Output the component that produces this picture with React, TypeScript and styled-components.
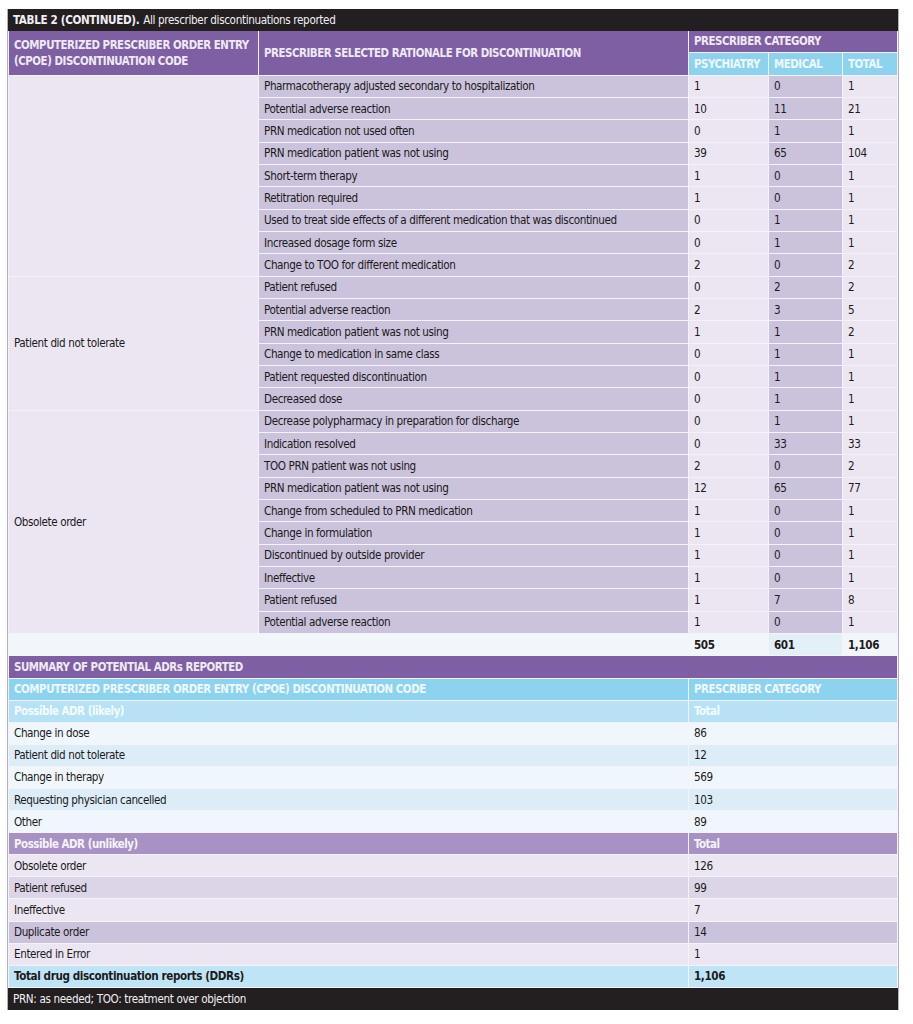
import React from "react";
import styled, { createGlobalStyle } from "styled-components";

const GlobalStyle = createGlobalStyle`
  body {
    margin: 0;
    background: #ffffff;
    font-family: "DejaVu Sans Condensed", "Liberation Sans Narrow", "Liberation Sans", sans-serif;
    color: #1d1a1b;
  }
`;

const Page = styled.div`
  padding: 9px 0 0 7px;
`;

const Frame = styled.div`
  width: 892px;
  box-sizing: border-box;
  border-left: 1px solid #b4b1b8;
  border-right: 1px solid #b4b1b8;
`;

const Bar = styled.div`
  height: 22px;
  display: flex;
  align-items: center;
  padding: 0 5px;
  background: #231f20;
  color: #f1eef3;
  font-size: 11.6px;
  letter-spacing: -0.35px;
  white-space: nowrap;

  b {
    font-weight: 700;
    margin-right: 4px;
  }
`;

const Table = styled.table`
  width: 100%;
  table-layout: fixed;
  border-collapse: collapse;
  font-size: 11.6px;
  letter-spacing: -0.4px;
`;

const tones = {
  purple: { bg: "#7f5fa3", fg: "#efe9f6" },
  blue: { bg: "#8dd3ef", fg: "#eef8fd" },
  paleBlue: { bg: "#b7e2f5", fg: "#f4fbfe" },
  softPurple: { bg: "#a892c3", fg: "#f6f2fa" },
};

type Tone = keyof typeof tones;

const HeadCell = styled.th<{ $tone: Tone }>`
  background: ${(p) => tones[p.$tone].bg};
  color: ${(p) => tones[p.$tone].fg};
  font-weight: 700;
  font-size: 11.4px;
  letter-spacing: -0.45px;
  text-align: left;
  vertical-align: middle;
  padding: 0 5px;
  line-height: 16px;
  white-space: nowrap;
  border: 1px solid #f3f0f7;
  border-top: none;
`;

const Row = styled.tr<{ $h?: number }>`
  height: ${(p) => p.$h ?? 22.35}px;
`;

const shades = {
  light: "#ebe6f1",
  mid: "#cbc2dc",
  soft: "#dcd5e8",
  blueA: "#eff7fc",
  blueB: "#dcedf8",
  total: "#bfe4f6",
  white: "#f1f6fa",
  whiteBlue: "#e4f0f8",
};

type Shade = keyof typeof shades;

const Cell = styled.td<{ $shade: Shade; $bold?: boolean }>`
  background: ${(p) => shades[p.$shade]};
  font-weight: ${(p) => (p.$bold ? 700 : 400)};
  padding: 0 5px;
  line-height: 14px;
  vertical-align: middle;
  white-space: nowrap;
  border: 1px solid #f5f3f9;
`;

type Line = [string, string, string, string];

const groups: { label: string; rows: Line[] }[] = [
  {
    label: "",
    rows: [
      ["Pharmacotherapy adjusted secondary to hospitalization", "1", "0", "1"],
      ["Potential adverse reaction", "10", "11", "21"],
      ["PRN medication not used often", "0", "1", "1"],
      ["PRN medication patient was not using", "39", "65", "104"],
      ["Short-term therapy", "1", "0", "1"],
      ["Retitration required", "1", "0", "1"],
      ["Used to treat side effects of a different medication that was discontinued", "0", "1", "1"],
      ["Increased dosage form size", "0", "1", "1"],
      ["Change to TOO for different medication", "2", "0", "2"],
    ],
  },
  {
    label: "Patient did not tolerate",
    rows: [
      ["Patient refused", "0", "2", "2"],
      ["Potential adverse reaction", "2", "3", "5"],
      ["PRN medication patient was not using", "1", "1", "2"],
      ["Change to medication in same class", "0", "1", "1"],
      ["Patient requested discontinuation", "0", "1", "1"],
      ["Decreased dose", "0", "1", "1"],
    ],
  },
  {
    label: "Obsolete order",
    rows: [
      ["Decrease polypharmacy in preparation for discharge", "0", "1", "1"],
      ["Indication resolved", "0", "33", "33"],
      ["TOO PRN patient was not using", "2", "0", "2"],
      ["PRN medication patient was not using", "12", "65", "77"],
      ["Change from scheduled to PRN medication", "1", "0", "1"],
      ["Change in formulation", "1", "0", "1"],
      ["Discontinued by outside provider", "1", "0", "1"],
      ["Ineffective", "1", "0", "1"],
      ["Patient refused", "1", "7", "8"],
      ["Potential adverse reaction", "1", "0", "1"],
    ],
  },
];

const likely: [string, string, Shade][] = [
  ["Change in dose", "86", "blueA"],
  ["Patient did not tolerate", "12", "blueB"],
  ["Change in therapy", "569", "blueA"],
  ["Requesting physician cancelled", "103", "blueB"],
  ["Other", "89", "blueA"],
];

const unlikely: [string, string, Shade][] = [
  ["Obsolete order", "126", "light"],
  ["Patient refused", "99", "soft"],
  ["Ineffective", "7", "light"],
  ["Duplicate order", "14", "mid"],
  ["Entered in Error", "1", "light"],
];

const SUMMARY_ROW = 22.1;

function App() {
  return (
    <Page>
      <GlobalStyle />
      <Frame>
        <Bar>
          <b>TABLE 2 (CONTINUED).</b> All prescriber discontinuations reported
        </Bar>
        <Table>
          <colgroup>
            <col style={{ width: 250 }} />
            <col style={{ width: 430 }} />
            <col style={{ width: 80 }} />
            <col style={{ width: 74 }} />
            <col />
          </colgroup>
          <thead>
            <Row $h={21}>
              <HeadCell $tone="purple" rowSpan={2}>
                COMPUTERIZED PRESCRIBER ORDER ENTRY
                <br />
                (CPOE) DISCONTINUATION CODE
              </HeadCell>
              <HeadCell $tone="purple" rowSpan={2}>
                PRESCRIBER SELECTED RATIONALE FOR DISCONTINUATION
              </HeadCell>
              <HeadCell $tone="purple" colSpan={3}>
                PRESCRIBER CATEGORY
              </HeadCell>
            </Row>
            <Row $h={23}>
              <HeadCell $tone="blue">PSYCHIATRY</HeadCell>
              <HeadCell $tone="blue">MEDICAL</HeadCell>
              <HeadCell $tone="blue">TOTAL</HeadCell>
            </Row>
          </thead>
          <tbody>
            {groups.map((g) =>
              g.rows.map((r, i) => (
                <Row key={g.label + i}>
                  {i === 0 && (
                    <Cell $shade="light" rowSpan={g.rows.length}>
                      {g.label}
                    </Cell>
                  )}
                  <Cell $shade="mid">{r[0]}</Cell>
                  <Cell $shade="light">{r[1]}</Cell>
                  <Cell $shade="mid">{r[2]}</Cell>
                  <Cell $shade="light">{r[3]}</Cell>
                </Row>
              ))
            )}
            <Row>
              <Cell $shade="white" colSpan={2} />
              <Cell $shade="white" $bold>505</Cell>
              <Cell $shade="whiteBlue" $bold>601</Cell>
              <Cell $shade="white" $bold>1,106</Cell>
            </Row>
            <Row $h={SUMMARY_ROW}>
              <HeadCell $tone="purple" colSpan={5}>
                SUMMARY OF POTENTIAL ADRs REPORTED
              </HeadCell>
            </Row>
            <Row $h={SUMMARY_ROW}>
              <HeadCell $tone="blue" colSpan={2}>
                COMPUTERIZED PRESCRIBER ORDER ENTRY (CPOE) DISCONTINUATION CODE
              </HeadCell>
              <HeadCell $tone="blue" colSpan={3}>
                PRESCRIBER CATEGORY
              </HeadCell>
            </Row>
            <Row $h={SUMMARY_ROW}>
              <HeadCell $tone="paleBlue" colSpan={2}>Possible ADR (likely)</HeadCell>
              <HeadCell $tone="paleBlue" colSpan={3}>Total</HeadCell>
            </Row>
            {likely.map(([label, n, shade]) => (
              <Row $h={SUMMARY_ROW} key={label}>
                <Cell $shade={shade} colSpan={2}>{label}</Cell>
                <Cell $shade={shade} colSpan={3}>{n}</Cell>
              </Row>
            ))}
            <Row $h={SUMMARY_ROW}>
              <HeadCell $tone="softPurple" colSpan={2}>Possible ADR (unlikely)</HeadCell>
              <HeadCell $tone="softPurple" colSpan={3}>Total</HeadCell>
            </Row>
            {unlikely.map(([label, n, shade]) => (
              <Row $h={SUMMARY_ROW} key={label}>
                <Cell $shade={shade} colSpan={2}>{label}</Cell>
                <Cell $shade={shade} colSpan={3}>{n}</Cell>
              </Row>
            ))}
            <Row $h={SUMMARY_ROW}>
              <Cell $shade="total" $bold colSpan={2}>Total drug discontinuation reports (DDRs)</Cell>
              <Cell $shade="total" $bold colSpan={3}>1,106</Cell>
            </Row>
          </tbody>
        </Table>
        <Bar>PRN: as needed; TOO: treatment over objection</Bar>
      </Frame>
    </Page>
  );
}

export default App;
